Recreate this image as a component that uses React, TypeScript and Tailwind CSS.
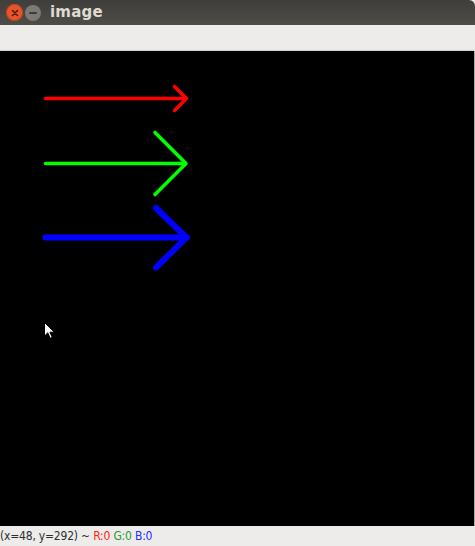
export default function App() {
  return (
    <div className="flex h-[546px] w-[475px] flex-col overflow-hidden bg-[#edecea] font-['DejaVu_Sans',sans-serif]">
      {/* title bar */}
      <div className="flex h-[25px] items-center rounded-tr-[6px] bg-gradient-to-b from-[#3f3e3a] to-[#4d4c47] pl-[6px]">
        <div className="flex h-[17px] w-[17px] items-center justify-center rounded-full bg-[#e6552b] shadow-[inset_0_0_0_1px_#c2401c]">
          <svg width="8" height="8" viewBox="0 0 8 8">
            <path d="M1.5 1.5 L6.5 6.5 M6.5 1.5 L1.5 6.5" stroke="#5a1a08" strokeWidth="1.6" strokeLinecap="round" />
          </svg>
        </div>
        <div className="ml-[2px] flex h-[16px] w-[16px] items-center justify-center rounded-full bg-[#7b7a75]">
          <div className="h-[2px] w-[8px] rounded bg-[#3e3d39]" />
        </div>
        <span className="ml-[9px] text-[15px] font-bold leading-none text-[#dfdbd2] tracking-[0.2px]">image</span>
      </div>

      {/* toolbar */}
      <div className="h-[26px] border-b border-[#d4d2cd] bg-[#edecea]" />

      {/* canvas */}
      <div className="relative flex-1 border-r border-[#aaa8a3] bg-black">
        <svg className="absolute left-0 top-0" width="474" height="475" viewBox="0 0 474 475">
          <g fill="none" strokeLinecap="round" strokeLinejoin="round">
            <path d="M45.5 47.5 H186.5 M174.5 35.5 L186.5 47.5 L174.5 59.5" stroke="#ff0000" strokeWidth="3.6" />
            <path d="M45.5 112.5 H186 M155 81.5 L186 112.5 L155 143.5" stroke="#00ff00" strokeWidth="3.6" />
            <path d="M45.5 186.5 H187 M156 157 L186.5 186.5 L156 216.5" stroke="#0000ff" strokeWidth="6" />
          </g>
        </svg>
        <svg className="absolute left-[44px] top-[271px]" width="12" height="18" viewBox="0 0 12 18">
          <path d="M0.5 0.5 V14 L3.8 10.8 L6.3 16.3 L8.3 15.4 L5.9 10.2 L10.3 10.2 Z" fill="#ffffff" stroke="#000000" strokeWidth="1" />
        </svg>
      </div>

      {/* status bar */}
      <div className="flex h-[20px] items-center whitespace-pre bg-[#edecea] text-[12px] leading-none tracking-[-0.2px] text-[#2e2e2e] [font-stretch:condensed]">
        <span>(x=48, y=292) ~ </span>
        <span className="text-[#ff2020]">R:0 </span>
        <span className="text-[#2a9a2a]">G:0 </span>
        <span className="text-[#2a2aff]">B:0</span>
      </div>
    </div>
  )
}
